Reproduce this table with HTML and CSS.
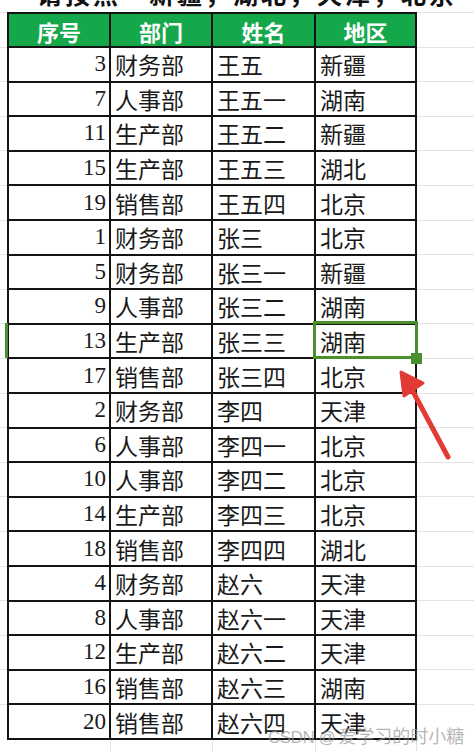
FILE: index.html
```html
<!DOCTYPE html>
<html lang="zh-CN">
<head>
<meta charset="utf-8">
<title>表格</title>
<link rel="stylesheet" href="styles.css">
</head>
<body>
<div class="page">
  <div class="title"><span>请按照“新疆，湖北，天津，北京”的顺序排列</span></div>
  <div class="sheet">
    <table class="grid">
      <colgroup><col class="c1"><col class="c2"><col class="c3"><col class="c4"></colgroup>
      <thead>
        <tr><th>序号</th><th>部门</th><th>姓名</th><th>地区</th></tr>
      </thead>
      <tbody>
        <tr><td class="num">3</td><td>财务部</td><td>王五</td><td>新疆</td></tr>
        <tr><td class="num">7</td><td>人事部</td><td>王五一</td><td>湖南</td></tr>
        <tr><td class="num">11</td><td>生产部</td><td>王五二</td><td>新疆</td></tr>
        <tr><td class="num">15</td><td>生产部</td><td>王五三</td><td>湖北</td></tr>
        <tr><td class="num">19</td><td>销售部</td><td>王五四</td><td>北京</td></tr>
        <tr><td class="num">1</td><td>财务部</td><td>张三</td><td>北京</td></tr>
        <tr><td class="num">5</td><td>财务部</td><td>张三一</td><td>新疆</td></tr>
        <tr><td class="num">9</td><td>人事部</td><td>张三二</td><td>湖南</td></tr>
        <tr><td class="num">13</td><td>生产部</td><td>张三三</td><td>湖南</td></tr>
        <tr><td class="num">17</td><td>销售部</td><td>张三四</td><td>北京</td></tr>
        <tr><td class="num">2</td><td>财务部</td><td>李四</td><td>天津</td></tr>
        <tr><td class="num">6</td><td>人事部</td><td>李四一</td><td>北京</td></tr>
        <tr><td class="num">10</td><td>人事部</td><td>李四二</td><td>北京</td></tr>
        <tr><td class="num">14</td><td>生产部</td><td>李四三</td><td>北京</td></tr>
        <tr><td class="num">18</td><td>销售部</td><td>李四四</td><td>湖北</td></tr>
        <tr><td class="num">4</td><td>财务部</td><td>赵六</td><td>天津</td></tr>
        <tr><td class="num">8</td><td>人事部</td><td>赵六一</td><td>天津</td></tr>
        <tr><td class="num">12</td><td>生产部</td><td>赵六二</td><td>天津</td></tr>
        <tr><td class="num">16</td><td>销售部</td><td>赵六三</td><td>湖南</td></tr>
        <tr><td class="num">20</td><td>销售部</td><td>赵六四</td><td>天津</td></tr>
      </tbody>
    </table>
    <div class="below">
      <div class="b0"></div><div class="b1"></div><div class="b2"></div><div class="b3"></div><div class="b4"></div>
    </div>
  </div>

  <div class="row-mark"></div>
  <div class="selection"></div>
  <div class="handle"></div>

  <svg class="arrow" width="474" height="751" viewBox="0 0 474 751">
    <line x1="448" y1="457" x2="410" y2="386" stroke="#e23a35" stroke-width="5" stroke-linecap="round"/>
    <polygon points="401,372 423,383 404,396" fill="#e23a35" stroke="#e23a35" stroke-width="3" stroke-linejoin="round"/>
  </svg>

  <div class="watermark"><span class="wm-latin">CSDN @</span>爱学习的时小糖</div>
</div>
</body>
</html>
```

FILE: styles.css
```css
html, body {
  margin: 0;
  padding: 0;
  background: #ffffff;
}

.page {
  position: relative;
  width: 474px;
  height: 751px;
  overflow: hidden;
  font-family: "Noto Sans CJK SC", "Noto Sans", sans-serif;
}

.title {
  height: 12px;
  overflow: hidden;
  padding-left: 37px;
}

.title span {
  display: block;
  margin-top: -19px;
  font-size: 25px;
  line-height: 25px;
  font-weight: 700;
  color: #111;
  white-space: nowrap;
  letter-spacing: 3px;
}

.sheet {
  background-color: #ffffff;
  background-image:
    linear-gradient(#e4e4e4, #e4e4e4),
    repeating-linear-gradient(to bottom, transparent 0, transparent 33.6px, #e4e4e4 33.6px, #e4e4e4 34.6px);
  background-size: 100% 1px, 100% 692px;
  background-position: 0 0, 0 0.6px;
  background-repeat: no-repeat, no-repeat;
}

.grid {
  margin-left: 7px;
  border-collapse: collapse;
  table-layout: fixed;
  width: 410px;
  background: #ffffff;
}

.grid col.c1 { width: 102px; }
.grid col.c2 { width: 102px; }
.grid col.c3 { width: 103px; }
.grid col.c4 { width: 101px; }

.grid th,
.grid td {
  border: 2px solid #141414;
  padding: 0 4px;
  white-space: nowrap;
  overflow: hidden;
}

.grid thead tr { height: 34px; }

.grid th {
  background: #15a84a;
  color: #ffffff;
  font-size: 22px;
  font-weight: 700;
  text-align: center;
  line-height: 30px;
  padding-top: 2px;
}

.grid tbody tr { height: 34.6px; }

.grid td {
  font-size: 23px;
  line-height: 30px;
  color: #1a1a1a;
  text-align: left;
  padding-left: 4px;
}

.grid td.num {
  text-align: right;
  padding-right: 3px;
  font-family: "Liberation Serif", "Noto Sans CJK SC", serif;
  font-size: 23px;
}

.below {
  display: flex;
  height: 20px;
}

.below div {
  border-right: 1px solid #e4e4e4;
  height: 100%;
  box-sizing: border-box;
}

.below .b0 { width: 9px; border-right: none; }
.below .b1 { width: 102px; }
.below .b2 { width: 102px; }
.below .b3 { width: 103px; }
.below .b4 { width: 101px; }

.row-mark {
  position: absolute;
  left: 5px;
  top: 323px;
  width: 3px;
  height: 35px;
  background: #4a8f2e;
}

.selection {
  position: absolute;
  left: 313px;
  top: 321px;
  width: 105px;
  height: 38px;
  border: 3px solid #4a8f2e;
  box-sizing: border-box;
}

.handle {
  position: absolute;
  left: 411px;
  top: 353px;
  width: 11px;
  height: 11px;
  background: #4a8f2e;
}

.arrow {
  position: absolute;
  left: 0;
  top: 0;
  pointer-events: none;
}

.watermark {
  position: absolute;
  left: 268px;
  top: 724px;
  font-size: 18px;
  line-height: 22px;
  color: rgba(150, 150, 150, 0.7);
  white-space: nowrap;
}

.watermark .wm-latin {
  font-family: "Liberation Sans", "Noto Sans CJK SC", sans-serif;
  font-size: 17px;
  letter-spacing: -0.5px;
  margin-right: 3px;
}
```
